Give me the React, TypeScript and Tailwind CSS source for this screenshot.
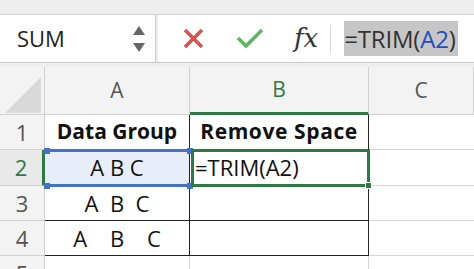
const FONT = { fontFamily: '"Open Sans", "Noto Sans", sans-serif' }

function Corner() {
  return (
    <div className="relative border-r border-b border-[#d0d0d0] bg-[#f3f3f3]">
      <svg className="absolute left-[5px] top-[10px]" width="36" height="36" viewBox="0 0 36 36">
        <polygon points="36,0 36,36 0,36" fill="#d9d9d9" />
      </svg>
    </div>
  )
}

function ColHead({ label, active }: { label: string; active?: boolean }) {
  return (
    <div
      className={`flex items-center justify-center border-r border-b border-[#d0d0d0] bg-[#f3f3f3] text-[21px] ${
        active ? 'text-[#2f7a44] border-b-[3px] border-b-[#2f7a44]' : 'text-[#555]'
      }`}
    >
      {label}
    </div>
  )
}

function RowHead({ n, active }: { n: number; active?: boolean }) {
  return (
    <div
      className={`flex items-center justify-center border-r border-b border-[#d0d0d0] text-[22px] ${
        active ? 'bg-[#e9e9e9] text-[#2f7a44] border-r-[3px] border-r-[#2f7a44]' : 'bg-[#f3f3f3] text-[#555]'
      }`}
    >
      {n}
    </div>
  )
}

export default function App() {
  return (
    <div className="h-[269px] w-[474px] overflow-hidden bg-[#eeeeee] text-[#111]" style={FONT}>
      <div className="h-[15px] border-b border-[#d2d2d2]" />

      {/* formula bar */}
      <div className="flex h-[48px] gap-[2px] border-b border-[#c8c8c8]">
        <div className="flex w-[156px] items-center justify-between border-r border-[#c8c8c8] bg-white pl-[17px] pr-[10px]">
          <span className="text-[22px] text-[#222]">SUM</span>
          <div className="flex flex-col gap-[8px]">
            <svg width="12" height="9" viewBox="0 0 12 9">
              <polygon points="6,0 12,9 0,9" fill="#666" />
            </svg>
            <svg width="12" height="9" viewBox="0 0 12 9">
              <polygon points="0,0 12,0 6,9" fill="#666" />
            </svg>
          </div>
        </div>
        <div className="flex flex-1 items-center bg-white">
          <svg className="ml-[25px]" width="21" height="21" viewBox="0 0 21 21">
            <path d="M2 2 L19 19 M19 2 L2 19" stroke="#d9534f" strokeWidth="3.6" />
          </svg>
          <svg className="ml-[32px]" width="28" height="21" viewBox="0 0 28 21">
            <path d="M2 10 L10 18 L26 2" stroke="#5cb660" strokeWidth="3.6" fill="none" />
          </svg>
          <span
            className="ml-[30px] text-[26px] italic text-[#333]"
            style={{ fontFamily: '"DejaVu Serif", "Liberation Serif", serif' }}
          >
            fx
          </span>
          <div className="ml-[12px] h-[28px] w-px bg-[#d8d8d8]" />
          <div className="ml-[13px] flex h-[35px] items-center bg-[#c6c6c6] pr-[2px] text-[24px] tracking-[-0.2px] text-[#333]">
            =TRIM(<span className="text-[#1f4fc0]">A2</span>)
          </div>
        </div>
      </div>

      <div className="h-[4px]" />

      {/* sheet */}
      <div className="relative grid grid-cols-[45px_145px_179px_105px] grid-rows-[48px_35px_36px_35px_35px_35px] bg-white">
        <Corner />
        <ColHead label="A" />
        <ColHead label="B" active />
        <ColHead label="C" />

        <RowHead n={1} />
        <div className="flex items-center justify-center border-r border-b border-[#222] text-[21px] font-bold">
          Data Group
        </div>
        <div className="flex items-center justify-center border-r border-b border-[#222] text-[21px] font-bold tracking-[0.6px]">
          Remove Space
        </div>
        <div className="border-b border-[#d6d6d6]" />

        <RowHead n={2} active />
        <div className="flex items-center justify-center border-r border-b border-[#222] bg-[#e8eef9] text-[22px] whitespace-pre">
          A B C
        </div>
        <div className="flex items-center border-r border-b border-[#222] pl-[5px] text-[22px]">=TRIM(A2)</div>
        <div className="border-b border-[#d6d6d6]" />

        <RowHead n={3} />
        <div className="flex items-center justify-center border-r border-b border-[#222] text-[22px] whitespace-pre">
          A  B  C
        </div>
        <div className="border-r border-b border-[#222]" />
        <div className="border-b border-[#d6d6d6]" />

        <RowHead n={4} />
        <div className="flex items-center justify-center border-r border-b border-[#222] text-[22px] whitespace-pre">
          A    B    C
        </div>
        <div className="border-r border-b border-[#222]" />
        <div className="border-b border-[#d6d6d6]" />

        <RowHead n={5} />
        <div className="border-r border-[#d6d6d6]" />
        <div className="border-r border-[#d6d6d6]" />
        <div />

        {/* A2 reference highlight */}
        <div className="pointer-events-none absolute left-[46px] top-[82px] h-[38px] w-[145px] border-y-[3px] border-[#4472c4]" />
        <div className="absolute left-[44px] top-[81px] h-[6px] w-[6px] bg-[#4472c4]" />
        <div className="absolute left-[187px] top-[81px] h-[6px] w-[6px] bg-[#4472c4]" />
        <div className="absolute left-[44px] top-[116px] h-[6px] w-[6px] bg-[#4472c4]" />
        <div className="absolute left-[187px] top-[116px] h-[6px] w-[6px] bg-[#4472c4]" />

        {/* B2 active cell */}
        <div className="pointer-events-none absolute left-[191px] top-[82px] h-[38px] w-[179px] border-[3px] border-[#2f7a44]" />
        <div className="absolute left-[365px] top-[115px] h-[7px] w-[7px] border border-white bg-[#2f7a44]" />
      </div>
    </div>
  )
}
